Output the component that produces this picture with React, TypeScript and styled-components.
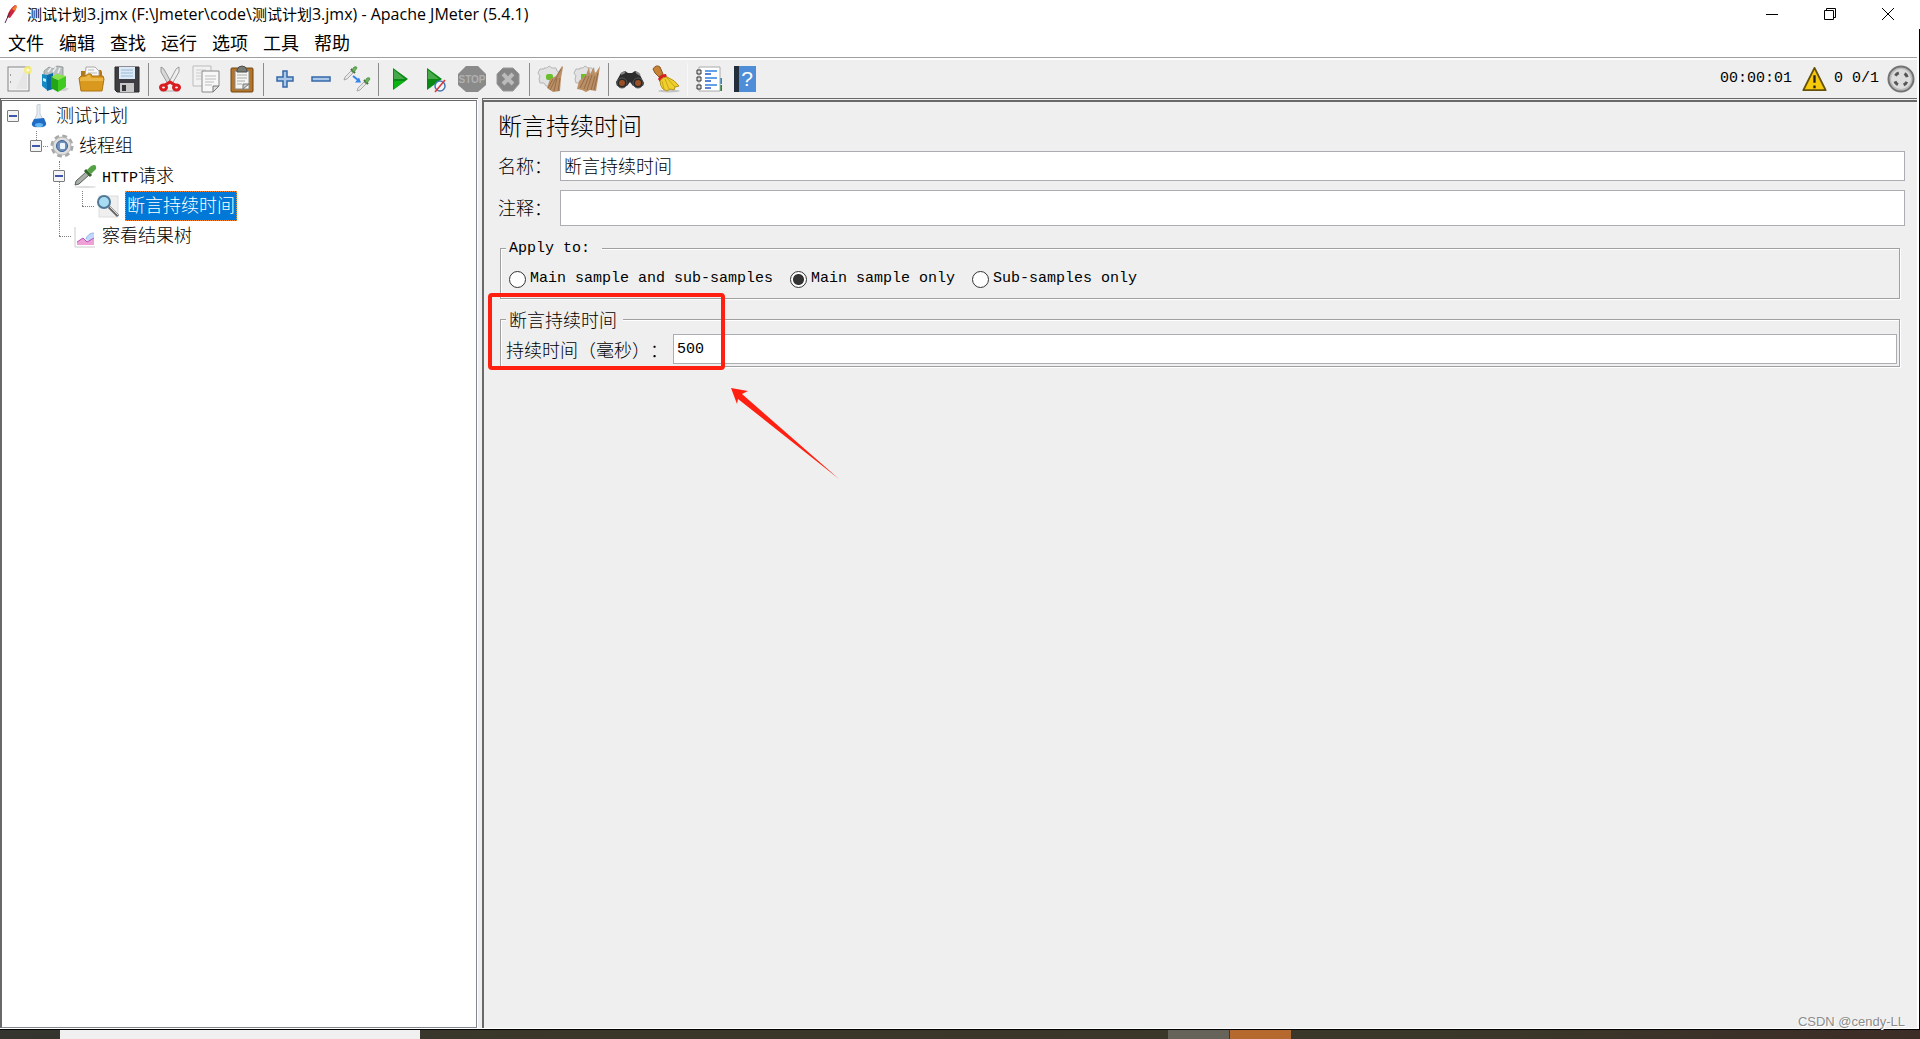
import React, { useState } from "react";
import styled, { createGlobalStyle, css } from "styled-components";

const cjk = `"Noto Sans CJK SC", sans-serif`;
const mono = `"Liberation Mono", "Noto Sans CJK SC", monospace`;
const face = "#efefef";
const edge = "#696969";
const line = "#a0a0a0";

const GlobalStyle = createGlobalStyle`
  * { box-sizing: border-box; }
  body { margin: 0; background: #fff; color: #000; font: 18px/24px ${cjk}; overflow: hidden; }
  button, input { font: inherit; color: inherit; }
`;

const Screen = styled.div`
  height: 100vh;
  display: flex;
  flex-direction: column;
`;

const Frame = styled.div`
  flex: 1;
  min-height: 0;
  display: flex;
  flex-direction: column;
  border-bottom: 1px solid #000;
`;

const TitleBar = styled.header`
  height: 29px;
  display: flex;
  align-items: center;
  padding: 0 3px 2px 4px;
`;

const Title = styled.h1`
  flex: 1;
  margin: 0 0 0 8px;
  font: 400 16px/24px "Open Sans", ${cjk};
`;

const TitleName = styled.span`
  font-family: ${cjk};
  font-size: 15px;
`;

const WindowButton = styled.button`
  width: 58px;
  height: 26px;
  display: grid;
  place-items: center;
  border: 0;
  padding: 0;
  background: none;
`;

const WindowBody = styled.div`
  flex: 1;
  min-height: 0;
  display: flex;
  flex-direction: column;
  border-right: 1px solid #000;
  padding: 0 2px 1px 0;
`;

const MenuBar = styled.nav`
  height: 28px;
  display: flex;
  align-items: center;
  padding: 0 0 2px 8px;
  gap: 15px;
`;

const MenuButton = styled.button`
  border: 0;
  padding: 0;
  background: none;
  font: 18px/24px ${cjk};
`;

const ToolBar = styled.div`
  height: 41px;
  display: flex;
  align-items: center;
  border-top: 1px solid ${line};
  box-shadow: inset 0 2px 0 #fff;
  background: ${face};
  padding: 2px 2px 0 1px;
`;

const ToolButton = styled.button`
  width: 36px;
  height: 34px;
  display: grid;
  place-items: center;
  border: 0;
  padding: 0;
  background: none;
`;

const Divider = styled.span<{ $faint?: boolean }>`
  width: 1px;
  height: 33px;
  margin: 0 3px;
  background: ${(p) => (p.$faint ? "#f8f8f8" : "#8c8c8c")};
`;

const Status = styled.div`
  margin-left: auto;
  display: flex;
  align-items: center;
  font: 15px/24px ${mono};
`;

const Clock = styled.span`
  margin-right: 9px;
`;

const Counts = styled.span`
  margin: 0 8px 0 6px;
`;

const Workspace = styled.main`
  flex: 1;
  min-height: 0;
  display: flex;
  gap: 4px;
  background: ${face};
  font-weight: 300;
`;

const panel = css`
  border: 0 solid ${edge};
  border-top-width: 1px;
  border-left-width: 1px;
`;

const TreePane = styled.section`
  ${panel}
  width: 478px;
  background: #fff;
  padding: 1px 1px 0 0;
`;

const TreeView = styled.div`
  height: 100%;
  border: 1px solid #828790;
  border-left-color: ${edge};
  border-top-color: ${edge};
`;

const TreeRow = styled.div`
  height: 30px;
  display: flex;
  align-items: center;
`;

type GuideKind = "none" | "stem" | "line" | "elbow";

const Guide = styled.span<{ $kind: GuideKind }>`
  position: relative;
  width: 23px;
  height: 30px;
  &::before {
    content: "";
    position: absolute;
    left: 11px;
    top: 0;
    height: ${(p) => (p.$kind === "line" ? "30px" : "15px")};
    border-left: ${(p) => (p.$kind === "none" ? "0" : "1px dotted #808080")};
  }
  &::after {
    content: "";
    position: absolute;
    left: 11px;
    right: 0;
    top: 15px;
    border-top: ${(p) => (p.$kind === "elbow" || p.$kind === "stem" ? "1px dotted #808080" : "0")};
  }
`;

const Expander = styled.button`
  position: absolute;
  z-index: 1;
  left: 5px;
  top: 9px;
  width: 12px;
  height: 12px;
  display: grid;
  place-items: center;
  padding: 0;
  border: 1px solid #7c7c7c;
  border-radius: 1px;
  background: #f5f5f5;
  &::before {
    content: "";
    width: 8px;
    height: 2px;
    background: #4058a8;
  }
`;

const TreeIcon = styled.span`
  width: 24px;
  height: 24px;
  margin: 0 3px 0 2px;
`;

const TreeLabel = styled.span<{ $selected?: boolean }>`
  height: 30px;
  line-height: 26px;
  padding: 0 2px;
  ${(p) =>
    p.$selected &&
    css`
      margin-left: 2px;
      background: #0078d7;
      color: #fff;
      outline: 1px dotted #ff8728;
      outline-offset: -1px;
    `}
`;

const Latin = styled.span`
  font: 15px/24px ${mono};
`;

const Editor = styled.section`
  ${panel}
  position: relative;
  flex: 1;
  padding: 1px 0 0;
`;

const EditorBody = styled.div`
  height: 100%;
  border: 0 solid ${edge};
  border-top-width: 2px;
  border-left-width: 1px;
  padding: 7px 12px 0 14px;
`;

const Heading = styled.h2`
  margin: 0 0 10px;
  font: 300 24px/32px ${cjk};
`;

const Field = styled.div<{ $tall?: boolean }>`
  height: ${(p) => (p.$tall ? 36 : 30)}px;
  display: flex;
  margin-bottom: 9px;
  align-items: center;
`;

const FieldLabel = styled.label`
  width: 62px;
  padding-bottom: 2px;
`;

const TextInput = styled.input<{ $mono?: boolean }>`
  flex: 1;
  min-width: 0;
  height: 100%;
  border: 1px solid #abadb3;
  border-radius: 0;
  padding: 0 3px 2px;
  background: #fff;
  outline: 0;
  ${(p) => p.$mono && css`padding-bottom: 0; font: 15px/24px ${mono};`}
`;

const Group = styled.fieldset`
  min-width: 0;
  margin: 10px 5px 0 2px;
  padding: 0;
  border: 1px solid ${line};
  box-shadow: 1px 1px 0 #fff, inset 1px 1px 0 #fff;
  & + & {
    margin-top: 8px;
  }
`;

const Legend = styled.legend<{ $mono?: boolean }>`
  margin-left: 5px;
  padding: 0 ${(p) => (p.$mono ? 12 : 6)}px 0 3px;
  height: 24px;
  background: ${face};
  ${(p) => p.$mono && css`font: 15px/26px ${mono};`}
`;

const Radios = styled.div`
  display: flex;
  gap: 17px;
  padding: 7px 8px;
`;

const RadioLabel = styled.label`
  display: flex;
  align-items: center;
  gap: 4px;
  font: 15px/24px ${mono};
`;

const Radio = styled.input`
  appearance: none;
  width: 17px;
  height: 17px;
  margin: 0;
  border: 1px solid #333;
  border-radius: 50%;
  background: #fff;
  &:checked {
    background: radial-gradient(circle, #333 5px, #fff 6px);
  }
`;

const Duration = styled.div`
  height: 35px;
  display: flex;
  align-items: center;
  gap: 5px;
  padding: 3px 2px 2px 5px;
`;

const DurationLabel = styled.label`
  text-spacing-trim: space-all;
`;

const Highlight = styled.div`
  position: absolute;
  left: 5px;
  top: 194px;
  width: 237px;
  height: 77px;
  border: 4px solid #ff2012;
  border-radius: 4px;
`;

const Arrow = styled.svg`
  position: absolute;
  left: 248px;
  top: 289px;
`;

const Watermark = styled.span`
  position: absolute;
  right: 12px;
  bottom: 0;
  font: 13px/12px "Liberation Sans", sans-serif;
  color: #8c8c8c;
  text-shadow: 1px 1px 0 #fff;
`;

const TaskBar = styled.footer`
  height: 9px;
  display: flex;
  background: linear-gradient(90deg, #33352e, #3b372a 30%, #3a382a 75%, #3d2d27);
`;

const TaskItem = styled.span<{ $before: number; $width: number; $color: string }>`
  width: ${(p) => p.$width}px;
  margin-left: ${(p) => p.$before}px;
  background: ${(p) => p.$color};
  overflow: hidden;
`;

type P = { children: React.ReactNode; w?: number; h?: number; box?: string };
const Svg = ({ children, w = 28, h = 28, box = "0 0 28 28" }: P) => (
  <svg width={w} height={h} viewBox={box} aria-hidden="true" display="block">
    {children}
  </svg>
);

const NewIcon = () => (
  <Svg>
    <rect x="3" y="2" width="21" height="24" fill="#f3f3f3" stroke="#858585" />
    <rect x="5" y="4" width="17" height="20" fill="#e6e6e6" />
    <path d="M5 4h15l-9 20H5z" fill="#ededed" />
    <path d="M5.500 9v2M5.500 16v2" stroke="#999" />
    <circle cx="23" cy="5" r="4" fill="#f7ec70" opacity=".85" />
    <circle cx="23" cy="5" r="1.500" fill="#fffde0" />
  </Svg>
);
const TemplatesIcon = () => (
  <Svg>
    <path d="M17 23h11l-3 3h-9z" fill="#bbb" opacity=".6" />
    <path d="M3 6l5-4 4 2 4-3 6 1v10H3z" fill="#b9bfc0" stroke="#7f8889" strokeWidth=".7" />
    <path d="M7 7l3-4M12 7l3-5M17 8l2-5" stroke="#eee" strokeWidth="1.500" />
    <path d="M1 9l5 1v15l-5-4z" fill="#1689c4" />
    <path d="M6 10l6-2v16l-6 2z" fill="#0b6ba6" />
    <path d="M2 13l3 1v3l-3-1z" fill="#c4ebff" />
    <path d="M10 12l6-3 9 2-8 4z" fill="#8be34a" />
    <path d="M10 12l7 3v12l-7-4z" fill="#25a415" />
    <path d="M17 15l8-4v11l-8 5z" fill="#3fca20" />
  </Svg>
);
const OpenIcon = () => (
  <Svg>
    <path d="M4 12V6h4l1-1h15l1 2v6z" fill="#b47716" />
    <path d="M8 12L9 2h9l4 4v7z" fill="#f8f8f8" stroke="#aaa" />
    <path d="M11 5h6M11 8h9" stroke="#bbb" />
    <path d="M2 13l2-2h4l3-2h3l1 2h11l1 3-2 12H4z" fill="#d9991f" stroke="#af7410" />
    <path d="M3 14l2-2h4l2-2h2l1 3h12v3H3z" fill="#ecb646" />
  </Svg>
);
const SaveIcon = () => (
  <Svg>
    <path d="M2 2h24v25H4l-2-2z" fill="#3d3d42" stroke="#29292c" />
    <rect x="6" y="2" width="16" height="12" fill="#dce9f6" />
    <path d="M8 5h12M8 8h12M8 11h12" stroke="#9bb9d5" />
    <rect x="7" y="18" width="14" height="9" fill="#c7c7c7" />
    <rect x="9" y="20" width="4" height="6" fill="#333" />
  </Svg>
);
const CutIcon = () => (
  <Svg>
    <ellipse cx="14" cy="26" rx="10" ry="1" fill="#ccc" />
    <path d="M5 2q3 1 4 4l6 11-3 2L5 7z" fill="#d8d8d8" stroke="#888" strokeWidth=".8" />
    <path d="M23 2q-3 1-4 4l-6 11 3 2 7-12z" fill="#eee" stroke="#888" strokeWidth=".8" />
    <ellipse cx="7.500" cy="22.500" rx="3" ry="2.500" fill="none" stroke="#d81c20" strokeWidth="3" />
    <ellipse cx="20.500" cy="22.500" rx="3" ry="2.500" fill="none" stroke="#d81c20" strokeWidth="3" />
    <path d="M9 20l5-3 5 3" stroke="#d81c20" strokeWidth="3" fill="none" />
  </Svg>
);
const CopyIcon = () => (
  <Svg>
    <path d="M1 1h18v20H1z" fill="#f2f2f2" stroke="#bbb" />
    <path d="M4 5h10M4 8h5M4 11h5M4 14h5" stroke="#ccc" />
    <path d="M10 6h17v15l-6 6H10z" fill="#f7f7f7" stroke="#888" />
    <path d="M13 11h11M13 14h11M13 17h9M13 20h7" stroke="#bbb" />
    <path d="M21 27v-6h6z" fill="#ddd" stroke="#777" />
  </Svg>
);
const PasteIcon = () => (
  <Svg>
    <rect x="3" y="3" width="22" height="24" rx="1" fill="#b3752a" stroke="#714510" />
    <path d="M7 6h14v18H7z" fill="#f5f5f3" stroke="#888" />
    <path d="M9 5q1-4 5-4t5 4v2H9z" fill="#777b75" stroke="#494c47" />
    <path d="M9 10h10M9 13h10M9 16h8M9 19h5" stroke="#aaa" />
    <path d="M15 24v-5h6z" fill="#ccc" stroke="#777" />
  </Svg>
);
const PlusIcon = () => (
  <Svg>
    <path d="M12 6h4v6h6v4h-6v6h-4v-6H6v-4h6z" fill="#abc8e8" stroke="#3568a8" strokeWidth="1.500" />
  </Svg>
);
const MinusIcon = () => (
  <Svg>
    <rect x="5" y="12" width="18" height="4" fill="#abc8e8" stroke="#3568a8" strokeWidth="1.500" />
  </Svg>
);
const SmallDropper = () => (
  <>
    <path d="M1 14l1-3 6-6 2 2-6 6z" fill="#e6e8e6" stroke="#999" strokeWidth=".8" />
    <path d="M8 3l4 4" stroke="#3f6c35" strokeWidth="2" />
    <path d="M9 4l2-3q3-1 3 1l-3 4z" fill="#6ab55c" stroke="#4c8a42" strokeWidth=".8" />
  </>
);
const ToggleIcon = () => (
  <Svg>
    <g transform="translate(0 1)"><SmallDropper /></g>
    <g transform="translate(13 12)"><SmallDropper /></g>
    <path d="M10 11l5 4" stroke="#3684ea" strokeWidth="2" />
    <path d="M18 17.500h-6l4-5z" fill="#3684ea" />
  </Svg>
);
const PlayIcon = () => (
  <Svg>
    <path d="M7 3l15 11L7 25z" fill="#078912" />
    <path d="M8 5l11 9H8z" fill="#48a84c" />
    <path d="M8 16h11L8 24z" fill="#0bb413" />
  </Svg>
);
const PlaySkipIcon = () => (
  <Svg>
    <path d="M5 3l15 11L5 25z" fill="#078912" />
    <path d="M6 5l11 9H6z" fill="#48a84c" />
    <circle cx="18" cy="21" r="5" fill="#f3f6fb" stroke="#4679b5" strokeWidth="1.500" />
    <path d="M23 15L13 27" stroke="#d93838" strokeWidth="1.500" />
  </Svg>
);
const StopIcon = () => (
  <Svg>
    <path d="M8 1h12l8 8v11l-8 7H8l-8-7V9z" fill="#8a8a8a" />
    <text x="14" y="18" textAnchor="middle" fontFamily="Liberation Sans, sans-serif" fontSize="10" fontWeight="700" fill="#b0b0b0">STOP</text>
  </Svg>
);
const ShutdownIcon = () => (
  <Svg>
    <path d="M9 3h10l6 6v10l-6 7H9l-6-7V9z" fill="#858585" stroke="#999" />
    <path d="M9 9l10 10M19 9L9 19" stroke="#bbb" strokeWidth="4" />
  </Svg>
);
const gearPath = "M7 3h3l2-2 3 2h4l1 3 3 2-2 4 2 4-3 3-4-1-3 3H9l-2-3-4 0-1-4 1-3-2-3 2-4 4 0z";
const ClearIcon = () => (
  <Svg>
    <path d={gearPath} fill="#e2e2e2" stroke="#b5b5b5" />
    <rect x="9" y="9" width="7" height="6" rx="2" fill="#69bf29" />
    <path d="M25 1l1 1-2 11-1 13-7 1-6-4 3-9 6-3z" fill="#ba8f66" />
    <path d="M24 4l-5 9-6 12M20 13l-3 13M23 13l-2 13M16 14l-5 9" stroke="#8a623d" strokeWidth=".8" fill="none" />
  </Svg>
);
const ClearAllIcon = () => (
  <Svg>
    <path d={gearPath} fill="#e2e2e2" stroke="#b5b5b5" />
    <rect x="8" y="9" width="5" height="5" fill="#69bf29" />
    <path d="M16 2l1 7 4-7 1 7 5-8-2 13-2 12-6-1-4 2-4-2-5-1 2-8 7-6z" fill="#ba8f66" />
    <path d="M13 11L7 23M16 11l-5 13M19 10l-5 15M22 11l-4 14M25 8l-4 17" stroke="#8a623d" strokeWidth=".8" />
  </Svg>
);
const SearchIcon = () => (
  <Svg>
    <path d="M5 8l4-2 3 2h4l3-2 4 2 5 10-1 3H17l-3-4-3 4H1l-1-4z" fill="#2d2d2e" />
    <path d="M5 9l4-2M20 7l4 3" stroke="#888" strokeWidth="2" />
    <circle cx="6" cy="18" r="5" fill="#292929" stroke="#555" />
    <circle cx="22" cy="18" r="5" fill="#292929" stroke="#555" />
    <circle cx="6" cy="18" r="3" fill="#9b4f25" />
    <circle cx="22" cy="18" r="3" fill="#9b4f25" />
  </Svg>
);
const BroomIcon = () => (
  <Svg>
    <ellipse cx="17" cy="26" rx="11" ry="1.500" fill="#c4c4c4" />
    <path d="M1 4q3-5 7-2l3 7-4 3-4-4z" fill="#c88233" stroke="#8b5521" />
    <path d="M6 14q2-5 8-5l1 3q-6 0-7 5z" fill="#d7201e" />
    <path d="M8 16q2-4 7-4 8 3 12 9l-4 1-1 3-4-1-3 2-4-2q-3-3-3-8z" fill="#f0d02b" stroke="#b49318" />
    <path d="M10 16l2 8M13 14l4 10M15 13l8 9" stroke="#c9a51c" fill="none" />
  </Svg>
);
const FunctionIcon = () => (
  <Svg>
    <path d="M24 13h3v6h-3z" fill="#258bd6" />
    <path d="M24 20h3v6h-3z" fill="#168b26" />
    <path d="M4 2h21v24H4z" fill="#fff" stroke="#aaa" />
    <path d="M10 6h12M10 13h12M10 20h12" stroke="#2f83e3" strokeWidth="1.500" />
    <path d="M10 9h6M10 16h6M10 23h6" stroke="#2459c8" strokeWidth="1.500" />
    <path d="M2 5h4v4H2zM2 12h4v4H2zM2 20h4v4H2z" fill="#ddd" stroke="#333" />
  </Svg>
);
const HelpIcon = () => (
  <Svg>
    <rect x="3" y="1" width="22" height="26" fill="#4e8ed8" />
    <path d="M3 1h5v26H3z" fill="#222e3c" />
    <text x="16" y="21" textAnchor="middle" fontFamily="Liberation Sans, sans-serif" fontSize="21" fill="#fff">?</text>
  </Svg>
);
const WarningIcon = () => (
  <Svg w={27} h={26}>
    <path d="M14 2l12 24H2z" fill="#f6c90c" stroke="#65510a" strokeWidth="2" strokeLinejoin="round" />
    <path d="M14 10v8M14 21v3" stroke="#222" strokeWidth="2.500" />
  </Svg>
);
const EngineIcon = () => (
  <Svg>
    <circle cx="14" cy="14" r="12.500" fill="#bbb" stroke="#737373" strokeWidth="2" />
    <circle cx="14" cy="14" r="10" fill="#ddd" />
    <circle cx="14" cy="14" r="6.500" fill="none" stroke="#555" strokeWidth="3" strokeDasharray="4.200 6" strokeDashoffset="-3" />
  </Svg>
);
const FlaskIcon = () => (
  <Svg w={24} h={24} box="0 0 24 24">
    <path d="M10 1l3-1v10l5 9q1 4-4 4H9q-5-1-3-4l4-9z" fill="#e5edf2" stroke="#c6cfd5" />
    <path d="M7 15l10-1 2 5q1 3-4 4H8q-4-1-3-4z" fill="#1f6dc4" />
    <ellipse cx="12" cy="21" rx="4" ry="2" fill="#62b7f3" />
  </Svg>
);
const GearIcon = () => (
  <Svg w={24} h={24} box="0 0 24 24">
    <circle cx="12" cy="12" r="9.500" fill="none" stroke="#a9a9a9" strokeWidth="4" strokeDasharray="4.460 3" />
    <circle cx="12" cy="12" r="9" fill="#dedede" stroke="#b5b5b5" />
    <circle cx="12" cy="12" r="5.500" fill="#6f93bf" stroke="#405f91" />
    <rect x="10" y="9" width="5" height="6" rx="1" fill="#edf4fb" />
  </Svg>
);
const SamplerIcon = () => (
  <Svg w={24} h={24} box="0 0 24 24">
    <ellipse cx="12" cy="23" rx="11" ry="1" fill="#ddd" />
    <path d="M2 21l1-4 10-9 3 3-10 9z" fill="#a9afa9" stroke="#5d5d5d" />
    <path d="M12 6l6 6" stroke="#356329" strokeWidth="3" />
    <path d="M14 6l4-4q6-3 5 3l-5 5z" fill="#53a244" />
  </Svg>
);
const MagnifierIcon = () => (
  <Svg w={24} h={24} box="0 0 24 24">
    <rect x="3" y="2" width="19" height="21" fill="#efefef" stroke="#ddd" />
    <circle cx="8" cy="8" r="6" fill="#a8dcf2" stroke="#4f7896" strokeWidth="2" />
    <path d="M13 13l9 9" stroke="#666" strokeWidth="3" />
    <path d="M14 13l8 8" stroke="#ddd" />
  </Svg>
);
const ResultsIcon = () => (
  <Svg w={24} h={24} box="0 0 24 24">
    <path d="M2 3v20h20" fill="none" stroke="#ccc" />
    <path d="M4 21v-3l6-4 4 4 7-5v8z" fill="#efa0d6" />
    <path d="M13 17q1-8 8-8v6z" fill="#c0d8fb" />
    <path d="M4 18l6-4 4 4 7-4" fill="none" stroke="#b450b8" />
    <path d="M13 15q2-6 8-6" fill="none" stroke="#8fb4ee" />
  </Svg>
);
const FeatherIcon = () => (
  <Svg w={15} h={20} box="0 0 15 20">
    <path d="M3 13Q5 5 11 1q3 0 0 6L6 14z" fill="#cf273b" />
    <path d="M8 5l4-4q2 1-1 6z" fill="#ef8228" />
    <path d="M1 19L6 8" stroke="#5b2350" />
  </Svg>
);

const menus = ["文件", "编辑", "查找", "运行", "选项", "工具", "帮助"];

const tools: [string, React.ComponentType][][] = [
  [["新建", NewIcon], ["模板", TemplatesIcon], ["打开", OpenIcon], ["保存", SaveIcon]],
  [["剪切", CutIcon], ["复制", CopyIcon], ["粘贴", PasteIcon]],
  [["展开", PlusIcon], ["折叠", MinusIcon], ["切换", ToggleIcon]],
  [["启动", PlayIcon], ["不停顿启动", PlaySkipIcon], ["停止", StopIcon], ["关闭", ShutdownIcon]],
  [["清除", ClearIcon], ["清除全部", ClearAllIcon]],
  [["查找", SearchIcon], ["重置查找", BroomIcon]],
  [["函数助手", FunctionIcon], ["帮助", HelpIcon]],
];

type Node = { guides: GuideKind[]; open?: boolean; icon: React.ComponentType; label: React.ReactNode; selected?: boolean };
const nodes: Node[] = [
  { guides: ["none"], open: true, icon: FlaskIcon, label: "测试计划" },
  { guides: ["none", "stem"], open: true, icon: GearIcon, label: "线程组" },
  { guides: ["none", "none", "line"], open: true, icon: SamplerIcon, label: <><Latin>HTTP</Latin>请求</> },
  { guides: ["none", "none", "line", "elbow"], icon: MagnifierIcon, label: "断言持续时间", selected: true },
  { guides: ["none", "none", "elbow"], icon: ResultsIcon, label: "察看结果树" },
];

const scopes = ["Main sample and sub-samples", "Main sample only", "Sub-samples only"];

export default function App() {
  const [scope, setScope] = useState(scopes[1]);
  return (
    <Screen>
      <GlobalStyle />
      <Frame>
        <TitleBar>
          <FeatherIcon />
          <Title>
            <TitleName>测试计划</TitleName>3.jmx (F:\Jmeter\code\<TitleName>测试计划</TitleName>3.jmx) - Apache JMeter (5.4.1)
          </Title>
          <WindowButton aria-label="最小化">
            <Svg w={12} h={12} box="0 0 12 12"><path d="M0 6.500h12" stroke="#000" /></Svg>
          </WindowButton>
          <WindowButton aria-label="还原">
            <Svg w={12} h={12} box="0 0 12 12"><path d="M.5 2.500h9v9h-9zM2.500 2.500v-2h9v9h-2" fill="none" stroke="#000" /></Svg>
          </WindowButton>
          <WindowButton aria-label="关闭窗口">
            <Svg w={12} h={12} box="0 0 12 12"><path d="M0 0l12 12M12 0L0 12" stroke="#000" /></Svg>
          </WindowButton>
        </TitleBar>
        <WindowBody>
          <MenuBar>
            {menus.map((m) => <MenuButton key={m}>{m}</MenuButton>)}
          </MenuBar>
          <ToolBar>
            {tools.map((group, i) => (
              <React.Fragment key={i}>
                {i > 0 && <Divider $faint={i === tools.length - 1} />}
                {group.map(([name, Icon]) => (
                  <ToolButton key={name} aria-label={name}><Icon /></ToolButton>
                ))}
              </React.Fragment>
            ))}
            <Status>
              <Clock>00:00:01</Clock>
              <WarningIcon />
              <Counts>0 0/1</Counts>
              <EngineIcon />
            </Status>
          </ToolBar>
          <Workspace>
            <TreePane>
              <TreeView>
                {nodes.map(({ guides, open, icon: Icon, label, selected }, i) => (
                  <TreeRow key={i}>
                    {guides.map((kind, g) => (
                      <Guide key={g} $kind={kind}>
                        {open && g === guides.length - 1 && <Expander aria-label="折叠节点" />}
                      </Guide>
                    ))}
                    <TreeIcon><Icon /></TreeIcon>
                    <TreeLabel $selected={selected}>{label}</TreeLabel>
                  </TreeRow>
                ))}
              </TreeView>
            </TreePane>
            <Editor>
              <EditorBody>
                <Heading>断言持续时间</Heading>
                <Field>
                  <FieldLabel htmlFor="name">名称：</FieldLabel>
                  <TextInput id="name" defaultValue="断言持续时间" />
                </Field>
                <Field $tall>
                  <FieldLabel htmlFor="comment">注释：</FieldLabel>
                  <TextInput id="comment" />
                </Field>
                <Group>
                  <Legend $mono>Apply to:</Legend>
                  <Radios>
                    {scopes.map((s) => (
                      <RadioLabel key={s}>
                        <Radio type="radio" name="scope" checked={scope === s} onChange={() => setScope(s)} />
                        {s}
                      </RadioLabel>
                    ))}
                  </Radios>
                </Group>
                <Group>
                  <Legend>断言持续时间</Legend>
                  <Duration>
                    <DurationLabel htmlFor="duration">持续时间（毫秒）：</DurationLabel>
                    <TextInput id="duration" $mono defaultValue="500" />
                  </Duration>
                </Group>
              </EditorBody>
              <Highlight />
              <Arrow width="110" height="94" viewBox="0 0 110 94" aria-hidden="true">
                <path d="M0 0l17 3-6 3 97 85L7 11l-1 5z" fill="#ff2012" />
              </Arrow>
              <Watermark>CSDN @cendy-LL</Watermark>
            </Editor>
          </Workspace>
        </WindowBody>
      </Frame>
      <TaskBar>
        <TaskItem $before={60} $width={360} $color="#f0f0f0">
          <svg width="360" height="9" aria-hidden="true">
            <circle cx="306" cy="9" r="5" fill="#c3cdfa" />
            <path d="M302 5h4v4h-4z" fill="#f25a13" />
            <path d="M320 9q4-4 8 0z" fill="#cfe2fb" />
          </svg>
        </TaskItem>
        <TaskItem $before={748} $width={61} $color="#66645a" />
        <TaskItem $before={1} $width={61} $color="#b5692e" />
        <TaskItem $before={498} $width={40} $color="transparent">
          <svg width="40" height="9" aria-hidden="true">
            <path d="M2 8.500h2M8 8.500h5M21 8.500h5M30 8.500h5" stroke="#fff" />
          </svg>
        </TaskItem>
      </TaskBar>
    </Screen>
  );
}
